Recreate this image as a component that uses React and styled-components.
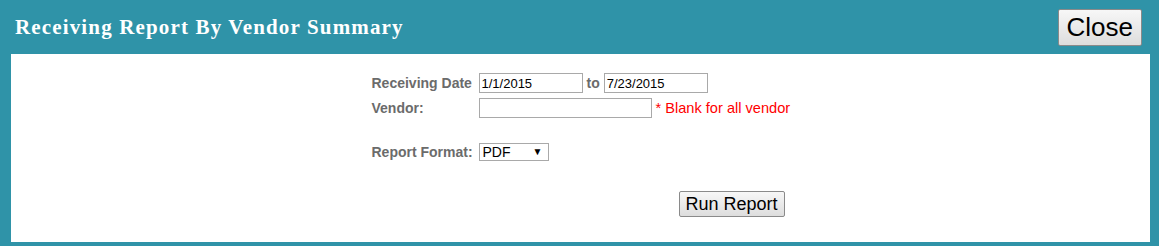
import React from "react";
import styled, { createGlobalStyle } from "styled-components";

const GlobalStyle = createGlobalStyle`
  html, body {
    margin: 0;
    padding: 0;
    background: #2f93a8;
  }
`;

const Panel = styled.div`
  width: 1159px;
  height: 246px;
  box-sizing: border-box;
  background: #2f93a8;
  padding: 0 9px 4px 11px;
  display: flex;
  flex-direction: column;
`;

const Header = styled.div`
  height: 54px;
  display: flex;
  align-items: center;
  justify-content: space-between;
  padding: 0 8px 0 4px;
`;

const Title = styled.h1`
  margin: 0;
  font-family: "Book Antiqua", Palatino, "Liberation Serif", serif;
  font-weight: bold;
  font-size: 21px;
  letter-spacing: 1.15px;
  color: #fff;
`;

const Button = styled.button`
  flex-shrink: 0;
  font-family: "Liberation Sans", Arial, sans-serif;
  font-size: ${(p) => p.$size || 17}px;
  color: #000;
  height: ${(p) => p.$h || 26}px;
  padding: 0 ${(p) => p.$px || 6}px;
  background: linear-gradient(#f7f7f7, #dddddd);
  border: 1px solid #8a8a8a;
  border-radius: 2px;
  cursor: pointer;
`;

const Body = styled.div`
  flex: 1;
  background: #fff;
  padding-top: 19px;
`;

const Form = styled.div`
  width: 418px;
  margin: 0 auto;
  display: flex;
  flex-direction: column;
  font-family: "Liberation Sans", Arial, sans-serif;
  font-size: 14px;
`;

const Row = styled.div`
  display: flex;
  align-items: center;
  height: ${(p) => p.$h || 20}px;
  margin-bottom: ${(p) => p.$mb ?? 5}px;
  white-space: nowrap;
`;

const Label = styled.span`
  flex-shrink: 0;
  font-weight: bold;
  color: #6b6b6b;
  font-size: 14px;
  width: ${(p) => (p.$w ? p.$w + "px" : "auto")};
  margin: ${(p) => p.$m || "0"};
`;

const Input = styled.input`
  flex-shrink: 0;
  box-sizing: border-box;
  width: ${(p) => p.$w}px;
  height: 20px;
  border: 1px solid #a9a9a9;
  padding: 1px 2px;
  font-family: "Liberation Sans", Arial, sans-serif;
  font-size: 13px;
  color: #000;
  outline: none;
`;

const Hint = styled.span`
  flex-shrink: 0;
  color: #ff0000;
  font-size: 14.6px;
  margin-left: 4px;
`;

const SelectWrap = styled.div`
  flex-shrink: 0;
  position: relative;
  width: 70px;
  height: 18px;
`;

const Select = styled.select`
  appearance: none;
  box-sizing: border-box;
  width: 70px;
  height: 18px;
  border: 1px solid #a9a9a9;
  border-radius: 0;
  background: #fff;
  padding: 0 3px;
  font-family: "Liberation Sans", Arial, sans-serif;
  font-size: 14px;
  color: #000;
  outline: none;
`;

const Arrow = styled.span`
  position: absolute;
  right: 6px;
  top: 3px;
  font-size: 10px;
  color: #000;
  pointer-events: none;
`;

const ButtonRow = styled.div`
  display: flex;
  padding-left: 307px;
  margin-top: 30px;
`;

export default function App() {
  return (
    <>
      <GlobalStyle />
      <Panel>
        <Header>
          <Title>Receiving Report By Vendor Summary</Title>
          <Button $size={26} $h={37} $px={8}>Close</Button>
        </Header>
        <Body>
          <Form>
            <Row>
              <Label $w={107}>Receiving Date</Label>
              <Input $w={104} defaultValue="1/1/2015" />
              <Label $m="0 4px 0 4px">to</Label>
              <Input $w={104} defaultValue="7/23/2015" />
            </Row>
            <Row $mb={25}>
              <Label $w={107}>Vendor:</Label>
              <Input $w={173} defaultValue="" />
              <Hint>* Blank for all vendor</Hint>
            </Row>
            <Row $mb={0} $h={18}>
              <Label $w={107}>Report Format:</Label>
              <SelectWrap>
                <Select defaultValue="PDF">
                  <option>PDF</option>
                  <option>Excel</option>
                </Select>
                <Arrow>▼</Arrow>
              </SelectWrap>
            </Row>
            <ButtonRow>
              <Button $size={18} $h={26} $px={6}>Run Report</Button>
            </ButtonRow>
          </Form>
        </Body>
      </Panel>
    </>
  );
}
